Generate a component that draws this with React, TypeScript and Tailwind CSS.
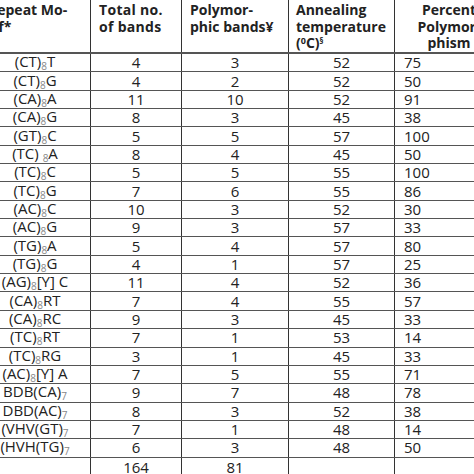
import React from "react";

type Row = { motif: React.ReactNode; total: string; poly: string; temp: string; pct: string };

const Sub = ({ children }: { children: React.ReactNode }) => (
  <span className="text-[10px] text-[#888] align-[-3px]">{children}</span>
);

const rows: Row[] = [
  { motif: <>(CT)<Sub>8</Sub>T</>, total: "4", poly: "3", temp: "52", pct: "75" },
  { motif: <>(CT)<Sub>8</Sub>G</>, total: "4", poly: "2", temp: "52", pct: "50" },
  { motif: <>(CA)<Sub>8</Sub>A</>, total: "11", poly: "10", temp: "52", pct: "91" },
  { motif: <>(CA)<Sub>8</Sub>G</>, total: "8", poly: "3", temp: "45", pct: "38" },
  { motif: <>(GT)<Sub>8</Sub>C</>, total: "5", poly: "5", temp: "57", pct: "100" },
  { motif: <>(TC) <Sub>8</Sub>A</>, total: "8", poly: "4", temp: "45", pct: "50" },
  { motif: <>(TC)<Sub>8</Sub>C</>, total: "5", poly: "5", temp: "55", pct: "100" },
  { motif: <>(TC)<Sub>8</Sub>G</>, total: "7", poly: "6", temp: "55", pct: "86" },
  { motif: <>(AC)<Sub>8</Sub>C</>, total: "10", poly: "3", temp: "52", pct: "30" },
  { motif: <>(AC)<Sub>8</Sub>G</>, total: "9", poly: "3", temp: "57", pct: "33" },
  { motif: <>(TG)<Sub>8</Sub>A</>, total: "5", poly: "4", temp: "57", pct: "80" },
  { motif: <>(TG)<Sub>8</Sub>G</>, total: "4", poly: "1", temp: "57", pct: "25" },
  { motif: <>(AG)<Sub>8</Sub>[Y] C</>, total: "11", poly: "4", temp: "52", pct: "36" },
  { motif: <>(CA)<Sub>8</Sub>RT</>, total: "7", poly: "4", temp: "55", pct: "57" },
  { motif: <>(CA)<Sub>8</Sub>RC</>, total: "9", poly: "3", temp: "45", pct: "33" },
  { motif: <>(TC)<Sub>8</Sub>RT</>, total: "7", poly: "1", temp: "53", pct: "14" },
  { motif: <>(TC)<Sub>8</Sub>RG</>, total: "3", poly: "1", temp: "45", pct: "33" },
  { motif: <>(AC)<Sub>8</Sub>[Y] A</>, total: "7", poly: "5", temp: "55", pct: "71" },
  { motif: <>BDB(CA)<Sub>7</Sub></>, total: "9", poly: "7", temp: "48", pct: "78" },
  { motif: <>DBD(AC)<Sub>7</Sub></>, total: "8", poly: "3", temp: "52", pct: "38" },
  { motif: <>(VHV(GT)<Sub>7</Sub></>, total: "7", poly: "1", temp: "48", pct: "14" },
  { motif: <>(HVH(TG)<Sub>7</Sub></>, total: "6", poly: "3", temp: "48", pct: "50" },
];

const cols = "grid grid-cols-[111px_91px_107px_106px_110px]";

export default function App() {
  return (
    <div
      className="w-[474px] h-[474px] overflow-hidden bg-white text-[#222]"
      style={{ fontFamily: '"Open Sans", "Noto Sans", sans-serif' }}
    >
      <div className="ml-[-20px] w-[525px]">
        {/* header */}
        <div className={`${cols} h-[54px] border-b-2 border-[#555] text-[14px] font-bold leading-[16.5px]`}>
          <div className="border-r border-[#333] pl-[8px] pt-[2px]">Repeat Mo-<br />tif*</div>
          <div className="border-r border-[#333] pl-[8px] pt-[2px] tracking-[0.3px]">Total no.<br />of bands</div>
          <div className="border-r border-[#333] pl-[8px] pt-[2px] whitespace-nowrap">Polymor-<br />phic bands¥</div>
          <div className="border-r border-[#333] pl-[7px] pt-[2px] whitespace-nowrap">
            Annealing<br />temperature<br />(<sup className="text-[9px]">0</sup>C)<sup className="text-[8px]">§</sup>
          </div>
          <div className="pt-[2px] text-center pr-[2px]">Percent<br />Polymor-<br />phism</div>
        </div>
        {rows.map((r, i) => (
          <div key={i} className={`${cols} h-[18.35px] border-b border-[#555] text-[15px] leading-none`}>
            <div className="border-r border-[#333] flex items-center justify-center whitespace-nowrap">
              <span>{r.motif}</span>
            </div>
            <div className="border-r border-[#333] flex items-center justify-center">{r.total}</div>
            <div className="border-r border-[#333] flex items-center justify-center">{r.poly}</div>
            <div className="border-r border-[#333] flex items-center justify-center">{r.temp}</div>
            <div className="flex items-center pl-[9px]">{r.pct}</div>
          </div>
        ))}
        <div className={`${cols} h-[20px] text-[15px] leading-none`}>
          <div className="border-r border-[#333]"></div>
          <div className="border-r border-[#333] flex items-center justify-center">164</div>
          <div className="border-r border-[#333] flex items-center justify-center">81</div>
          <div className="border-r border-[#333]"></div>
          <div></div>
        </div>
      </div>
    </div>
  );
}
